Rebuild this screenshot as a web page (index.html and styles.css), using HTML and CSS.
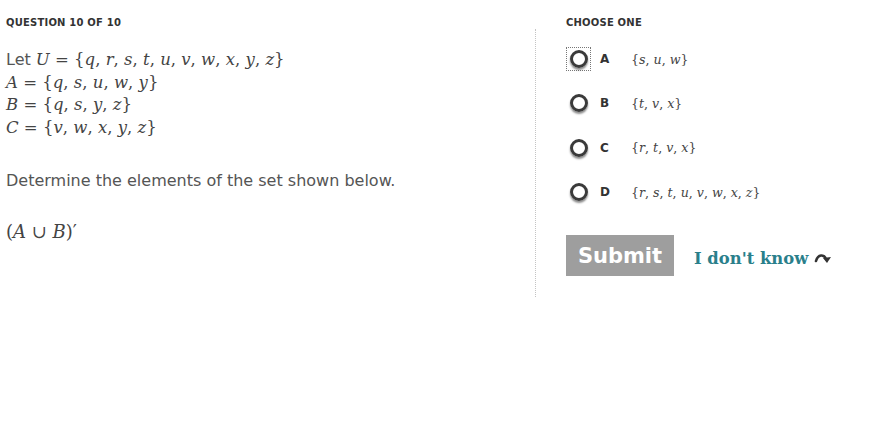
FILE: index.html
```html
<!DOCTYPE html>
<html lang="en">

<head>
    <meta charset="UTF-8">
    <title>Question 10 of 10</title>
    <link rel="stylesheet" href="styles.css">
</head>

<body>
    <div class="quiz">
        <div class="question">
            <div class="label">Question 10 of 10</div>
            <div class="sets">
                <div>Let <span class="math"><i>U</i> = {<i>q</i>, <i>r</i>, <i>s</i>, <i>t</i>, <i>u</i>, <i>v</i>, <i>w</i>, <i>x</i>, <i>y</i>, <i>z</i>}</span></div>
                <div class="math"><i>A</i> = {<i>q</i>, <i>s</i>, <i>u</i>, <i>w</i>, <i>y</i>}</div>
                <div class="math"><i>B</i> = {<i>q</i>, <i>s</i>, <i>y</i>, <i>z</i>}</div>
                <div class="math"><i>C</i> = {<i>v</i>, <i>w</i>, <i>x</i>, <i>y</i>, <i>z</i>}</div>
            </div>
            <p class="prompt">Determine the elements of the set shown below.</p>
            <div class="math expr">(<i>A</i> ∪ <i>B</i>)′</div>
        </div>

        <div class="answers">
            <div class="label">Choose one</div>
            <ul class="choices">
                <li><span class="radio focused"><span class="dot"></span></span><b>A</b><span class="math small">{<i>s</i>, <i>u</i>, <i>w</i>}</span></li>
                <li><span class="radio"><span class="dot"></span></span><b>B</b><span class="math small">{<i>t</i>, <i>v</i>, <i>x</i>}</span></li>
                <li><span class="radio"><span class="dot"></span></span><b>C</b><span class="math small">{<i>r</i>, <i>t</i>, <i>v</i>, <i>x</i>}</span></li>
                <li><span class="radio"><span class="dot"></span></span><b>D</b><span class="math small">{<i>r</i>, <i>s</i>, <i>t</i>, <i>u</i>, <i>v</i>, <i>w</i>, <i>x</i>, <i>z</i>}</span></li>
            </ul>
            <div class="actions">
                <button class="submit">Submit</button>
                <a class="skip" href="#">I don't know
                    <svg width="19" height="12" viewBox="0 0 19 12"><path d="M2 9 C4 2 10 2 12 7" fill="none" stroke="#333" stroke-width="2.6" stroke-linecap="round"/><path d="M9 6 L17 5 L13 11 Z" fill="#333"/></svg>
                </a>
            </div>
        </div>
    </div>
</body>

</html>
```

FILE: styles.css
```css
body {
    margin: 0;
    font-family: "DejaVu Sans", Verdana, sans-serif;
    color: #555;
    background-color: #fff;
}

.quiz {
    display: flex;
    padding-top: 17px;
}

.question {
    width: 535px;
    padding-left: 6px;
    box-sizing: border-box;
}

.label {
    font-size: 10px;
    font-weight: bold;
    text-transform: uppercase;
    color: #333;
    letter-spacing: 0.2px;
}

.math {
    font-family: "DejaVu Serif", "Liberation Serif", serif;
    font-size: 16.5px;
    color: #444;
}

.math i {
    font-style: italic;
    font-synthesis: style;
}

.sets {
    margin-top: 21px;
    line-height: 22.5px;
}

.sets > div:first-child {
    font-size: 16px;
}

.prompt {
    margin: 32px 0 0;
    font-size: 16px;
}

.expr {
    margin-top: 31px;
    font-size: 18px;
}

.answers {
    padding-left: 30px;
    border-left: 1px dotted #c4c4c4;
    margin-top: 12px;
    height: 268px;
}

.answers .label {
    margin-top: -12px;
}

.choices {
    list-style: none;
    margin: 9px 0 0;
    padding: 0;
}

.choices li {
    display: flex;
    align-items: center;
    height: 44.3px;
}

.radio {
    width: 25px;
    height: 24px;
    display: flex;
    align-items: center;
    justify-content: center;
    box-sizing: border-box;
    border: 1px dotted transparent;
}

.radio.focused {
    border-color: #777;
}

.dot {
    width: 18px;
    height: 18px;
    box-sizing: border-box;
    border: 3px solid #3a3a3a;
    border-radius: 50%;
    box-shadow: 0 2px 2px rgba(0, 0, 0, 0.45);
}

.choices b {
    font-size: 12px;
    color: #333;
    width: 40px;
    padding-left: 9px;
    box-sizing: border-box;
}

.math.small {
    font-size: 12.6px;
}

.actions {
    display: flex;
    align-items: center;
    margin-top: 21px;
}

.submit {
    width: 108px;
    height: 41px;
    border: none;
    background-color: #9e9e9e;
    color: #fff;
    font-family: "DejaVu Sans", Verdana, sans-serif;
    font-weight: bold;
    font-size: 21px;
    cursor: pointer;
}

.skip {
    margin-left: 20px;
    font-family: "DejaVu Serif", Georgia, serif;
    font-weight: bold;
    font-size: 16.4px;
    color: #2a7f8b;
    text-decoration: none;
    display: flex;
    align-items: center;
    gap: 6px;
    padding-top: 5px;
}
```
